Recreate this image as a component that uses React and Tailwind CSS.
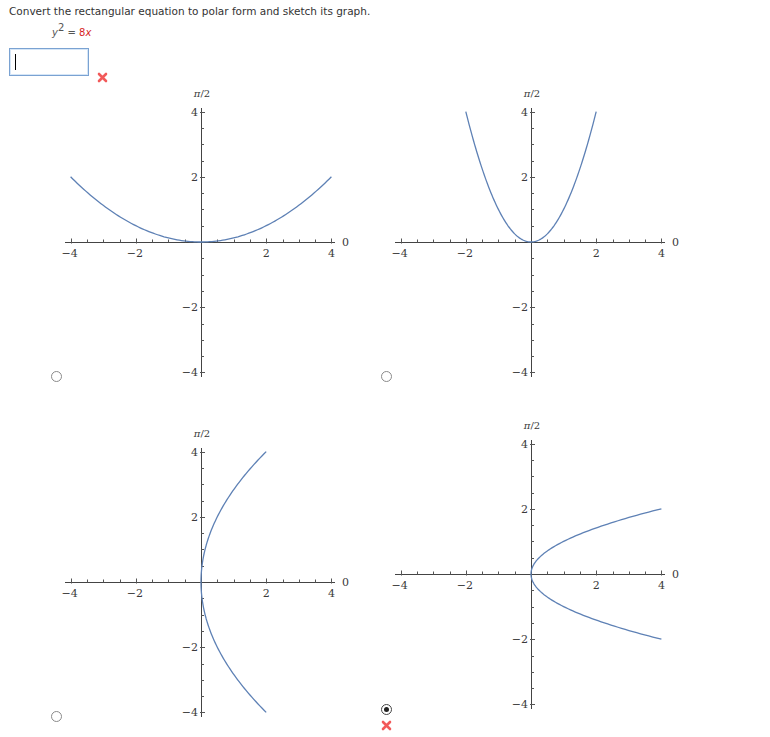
import React from 'react';

const S = 32.6;
const OX = 139;
const OY = 157;

const px = (x) => OX + x * S;
const py = (y) => OY - y * S;

function buildPath(fn, from, to, steps = 120) {
  let d = '';
  for (let i = 0; i <= steps; i++) {
    const t = from + ((to - from) * i) / steps;
    const [x, y] = fn(t);
    d += (i === 0 ? 'M' : 'L') + px(x).toFixed(2) + ' ' + py(y).toFixed(2) + ' ';
  }
  return d;
}

const CURVES = [
  buildPath((t) => [t, (t * t) / 8], -4, 4),
  buildPath((t) => [t, t * t], -2, 2),
  buildPath((t) => [(t * t) / 8, t], -4, 4),
  buildPath((t) => [t * t, t], -2, 2),
];

const TICKS = [];
for (let i = -8; i <= 8; i++) {
  if (i !== 0) TICKS.push(i / 2);
}

function Graph({ curve }) {
  return (
    <svg width="300" height="300" viewBox="0 0 300 300" className="block shrink-0 overflow-visible">
      {/* axes */}
      <line x1={OX - 136} y1={OY + 0.5} x2={OX + 134} y2={OY + 0.5} stroke="#444" strokeWidth="1" />
      <line x1={OX + 0.5} y1={OY - 134} x2={OX + 0.5} y2={OY + 135} stroke="#444" strokeWidth="1" />

      {/* horizontal ticks */}
      {TICKS.map((t) => {
        const major = Number.isInteger(t) && t % 2 === 0;
        const x = Math.round(px(t)) + 0.5;
        return (
          <line
            key={'h' + t}
            x1={x}
            y1={OY - (major ? 3.5 : 2.5)}
            x2={x}
            y2={OY + (major ? 1.5 : 0.5)}
            stroke="#555"
            strokeWidth="1"
          />
        );
      })}

      {/* vertical ticks */}
      {TICKS.map((t) => {
        const major = Number.isInteger(t) && t % 2 === 0;
        const y = Math.round(py(t)) + 0.5;
        return (
          <line
            key={'v' + t}
            x1={OX - (major ? 1 : 0)}
            y1={y}
            x2={OX + (major ? 4 : 3)}
            y2={y}
            stroke="#555"
            strokeWidth="1"
          />
        );
      })}

      <g fontFamily="'DejaVu Serif', 'Liberation Serif', serif" fontSize="11" fill="#3a3a3a">
        <text x={px(-4) - 1} y={OY + 15} textAnchor="middle">−4</text>
        <text x={px(-2) - 1} y={OY + 15} textAnchor="middle">−2</text>
        <text x={px(2)} y={OY + 15} textAnchor="middle">2</text>
        <text x={px(4)} y={OY + 15} textAnchor="middle">4</text>
        <text x={OX + 141} y={OY + 4}>0</text>

        <text x={OX - 3} y={py(4) + 4} textAnchor="end">4</text>
        <text x={OX - 3} y={py(2) + 4} textAnchor="end">2</text>
        <text x={OX - 3} y={py(-2) + 4} textAnchor="end">−2</text>
        <text x={OX - 3} y={py(-4) + 4} textAnchor="end">−4</text>

        <text x={OX + 1} y={OY - 145} textAnchor="middle" fontSize="10">
          <tspan fontStyle="italic">π</tspan>/2
        </text>
      </g>

      <path d={curve} fill="none" stroke="#5e81b5" strokeWidth="1.3" strokeLinejoin="round" />
    </svg>
  );
}

function Radio({ checked }) {
  return (
    <span
      className={
        'flex h-[11px] w-[11px] items-center justify-center rounded-full border bg-white ' +
        (checked ? 'border-[#444]' : 'border-[#8a8a8a]')
      }
    >
      {checked && <span className="h-[5px] w-[5px] rounded-full bg-[#222]" />}
    </span>
  );
}

function WrongMark() {
  return (
    <svg width="11" height="11" viewBox="0 0 11 11" className="block">
      <path d="M2 2 L9 9 M9 2 L2 9" stroke="#f25a5a" strokeWidth="2.6" strokeLinecap="round" />
    </svg>
  );
}

export default function App() {
  return (
    <div
      className="min-h-screen bg-white pt-[4px] pl-[9px] text-[#333]"
      style={{ fontFamily: "'DejaVu Sans', Verdana, sans-serif" }}
    >
      <p className="text-[10.5px] leading-[14px]">
        Convert the rectangular equation to polar form and sketch its graph.
      </p>

      <div className="ml-[43px] mt-[8px] text-[10px] leading-[14px] text-[#555]">
        <span className="italic">y</span>
        <sup className="text-[10px]">2</sup>
        <span> = </span>
        <span className="text-[#d61f1f]">
          8<span className="italic">x</span>
        </span>
      </div>

      <div className="mt-[8px] flex items-end">
        <div className="flex h-[28px] w-[80px] items-center border border-[#7aa2d2] pl-[5px] shadow-[inset_0_0_0_1px_#d6e6f7]">
          <span className="block h-[16px] w-[1px] bg-black" />
        </div>
        <div className="mb-[-7px] ml-[8px]">
          <WrongMark />
        </div>
      </div>

      <div className="ml-[42px] mt-[9px]">
        <div className="flex items-start gap-[19px]">
          <div className="flex items-end">
            <div className="mb-[3px]">
              <Radio />
            </div>
            <Graph curve={CURVES[0]} />
          </div>
          <div className="flex items-end">
            <div className="mb-[3px]">
              <Radio />
            </div>
            <Graph curve={CURVES[1]} />
          </div>
        </div>

        <div className="mt-[32px] flex items-start gap-[19px]">
          <div className="flex items-end pt-[8px]">
            <div className="mb-[3px]">
              <Radio />
            </div>
            <Graph curve={CURVES[2]} />
          </div>
          <div className="flex items-end">
            <div className="mb-[-14px] flex flex-col items-center gap-[5px]">
              <Radio checked />
              <WrongMark />
            </div>
            <Graph curve={CURVES[3]} />
          </div>
        </div>
      </div>
    </div>
  );
}
